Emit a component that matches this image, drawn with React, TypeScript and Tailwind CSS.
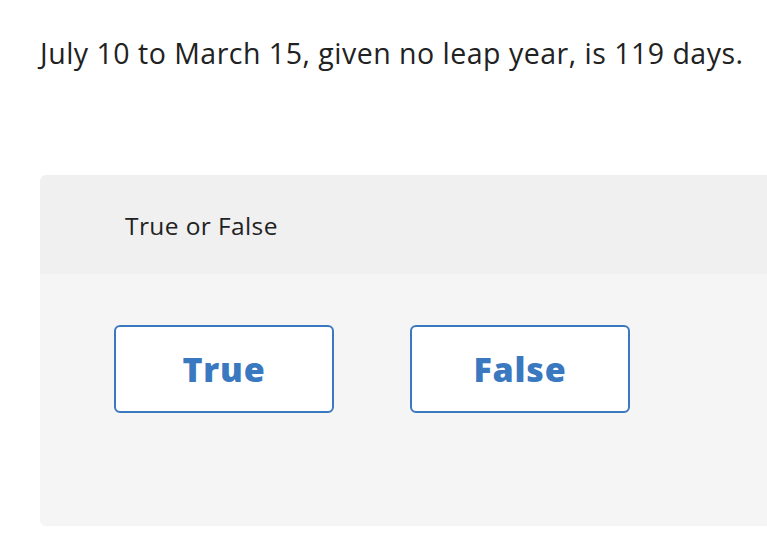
import React from 'react'

export default function App() {
  return (
    <div className="w-[767px] h-[535px] overflow-hidden bg-white text-[#222222]" style={{ fontFamily: '"Open Sans", Lato, sans-serif' }}>
      <h1 className="pl-10 pt-[33px] text-[28.5px] leading-[40px] font-normal tracking-[0.5px]">
        July 10 to March 15, given no leap year, is 119 days.
      </h1>

      <div className="ml-10 mt-[102px] rounded-l-md overflow-hidden">
        <div className="bg-[#f0f0f0] h-[99px] flex items-center pl-[85px] pt-[3px]">
          <span className="text-[24.5px] tracking-[0.4px]">True or False</span>
        </div>
        <div className="bg-[#f5f5f5] h-[252px] pl-[74px] pt-[51px] flex items-start gap-[76px]">
          <button className="w-[220px] h-[88px] bg-white border-2 border-[#3a78c0] rounded-md text-[#3a78c0] text-[34px] font-extrabold tracking-[0.8px]">
            True
          </button>
          <button className="w-[220px] h-[88px] bg-white border-2 border-[#3a78c0] rounded-md text-[#3a78c0] text-[34px] font-extrabold tracking-[0.8px]">
            False
          </button>
        </div>
      </div>
    </div>
  )
}
